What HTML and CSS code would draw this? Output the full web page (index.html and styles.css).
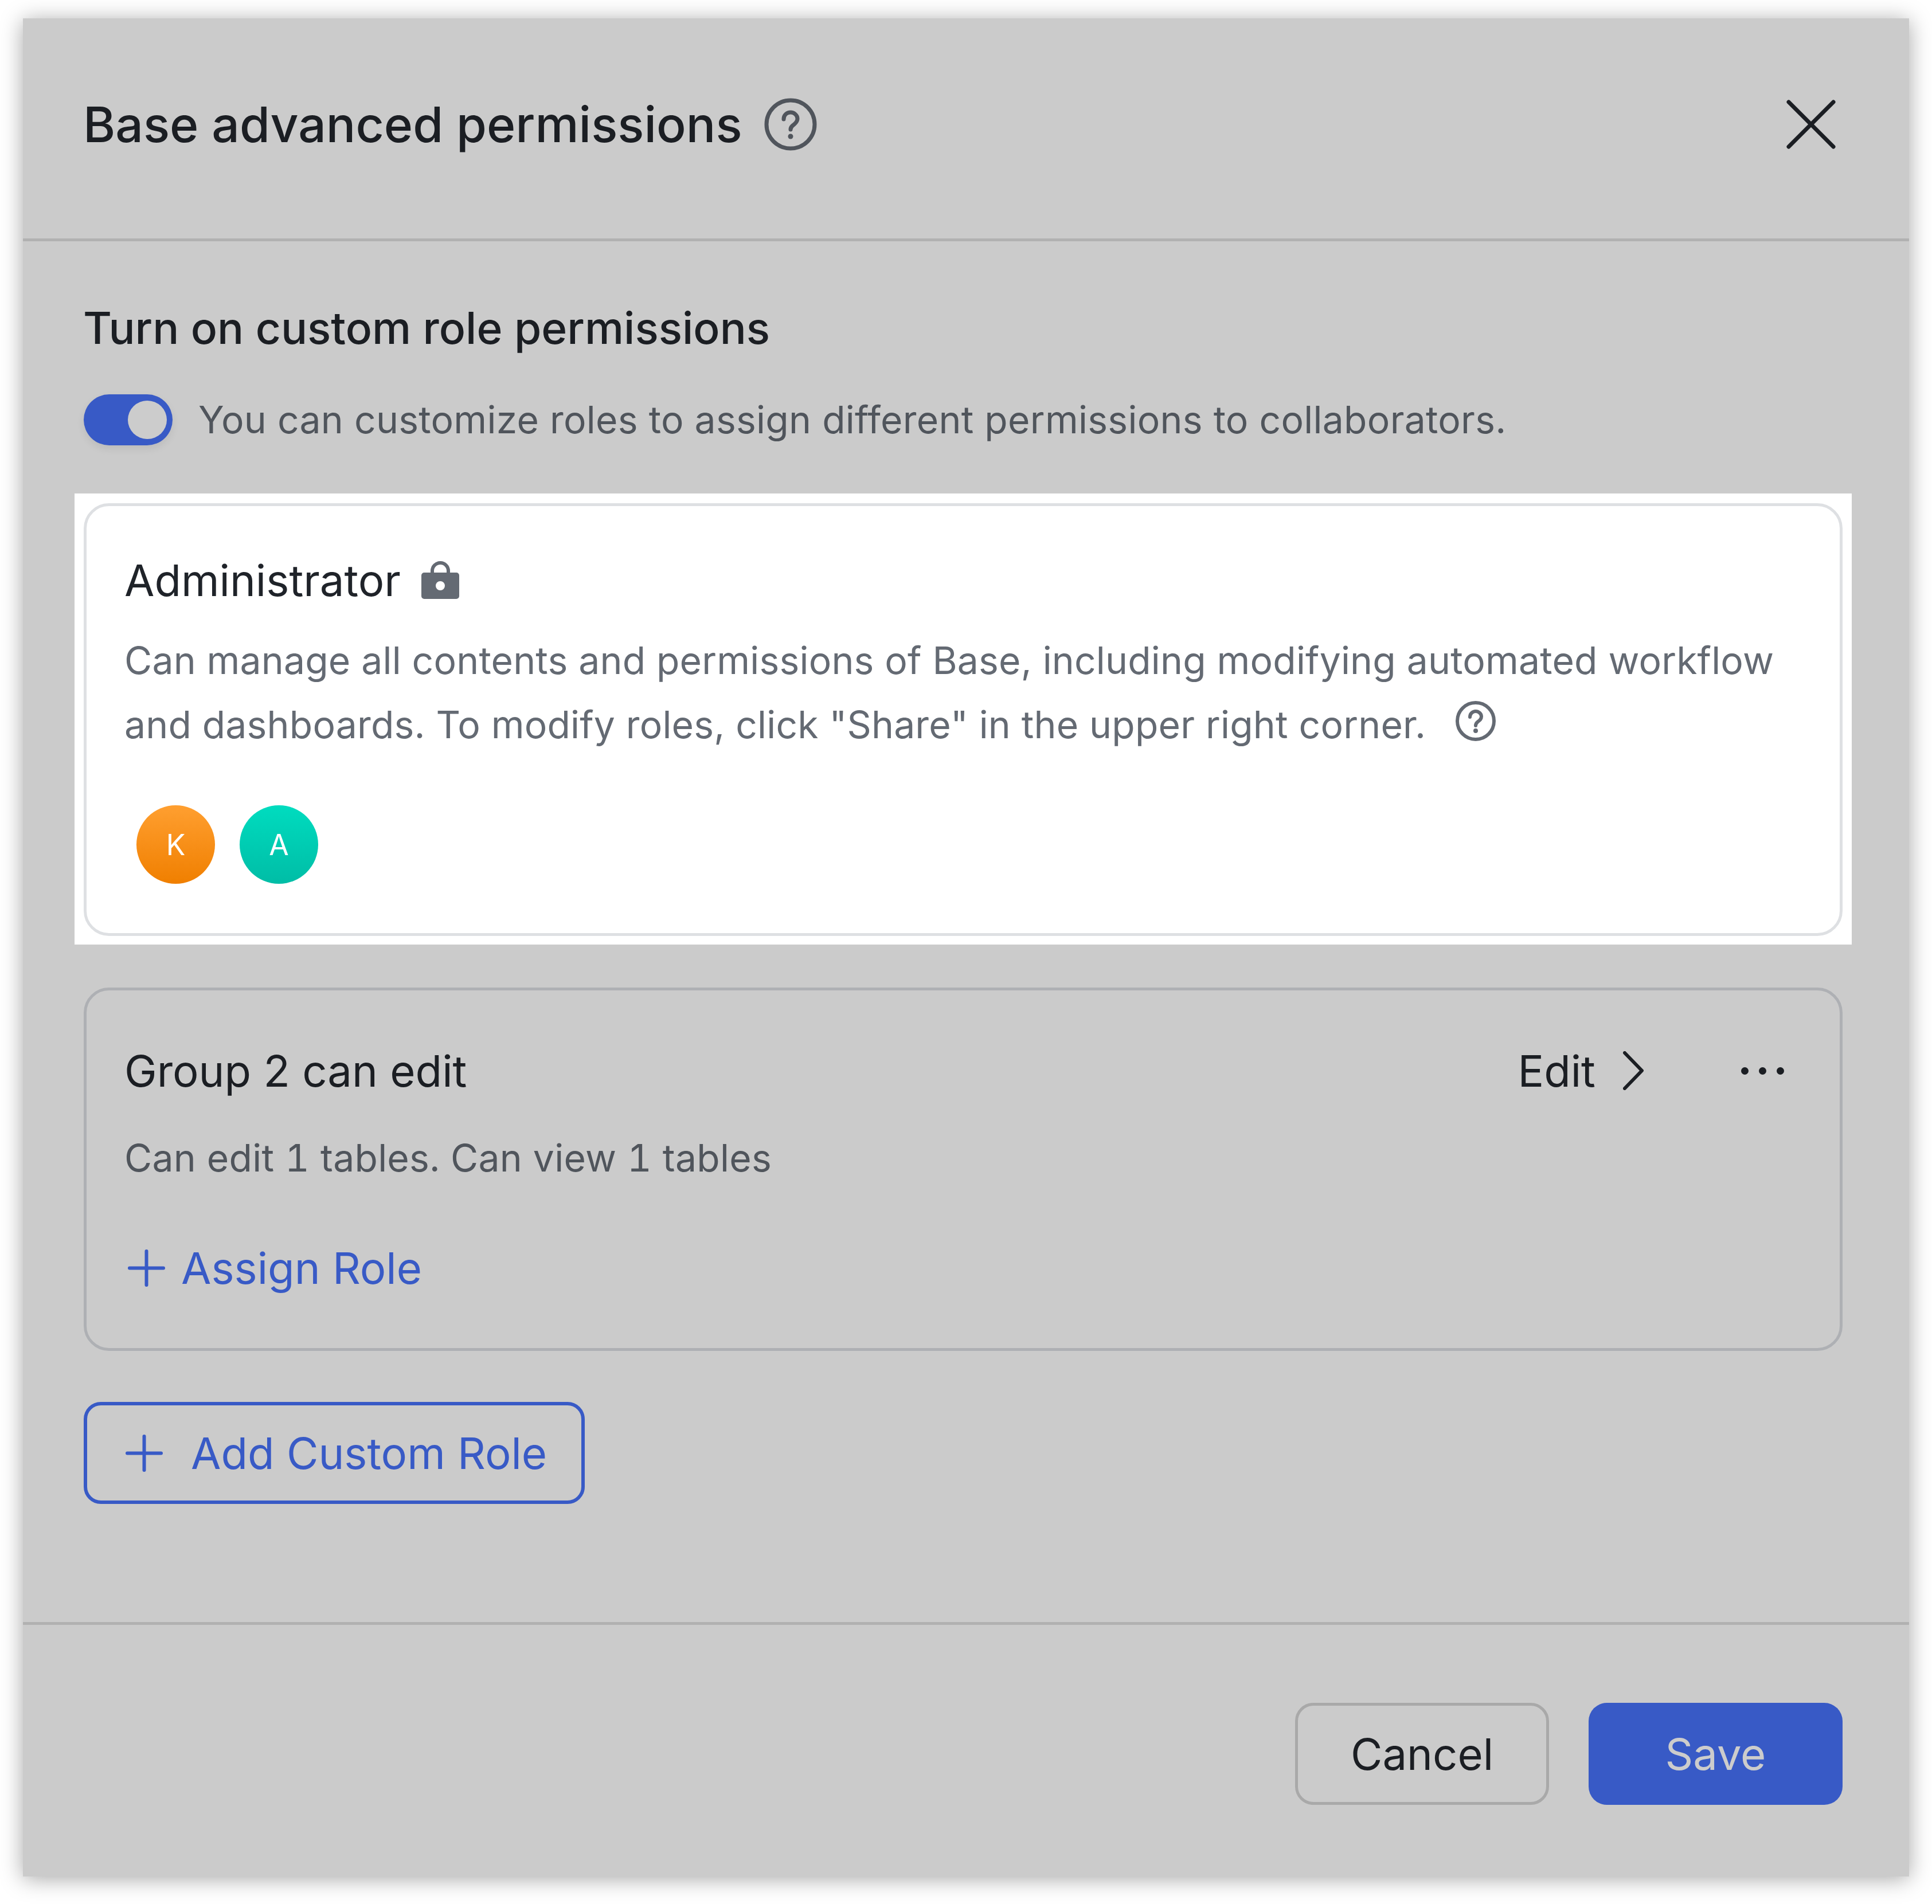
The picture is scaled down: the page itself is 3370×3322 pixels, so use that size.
FILE: index.html
```html
<!DOCTYPE html>
<html lang="en">
<head>
    <meta charset="UTF-8">
    <title>Base advanced permissions</title>
    <link rel="stylesheet" href="styles.css">
</head>
<body>
    <div class="dialog">
        <div class="dialog-header">
            <h1 class="dialog-title">Base advanced permissions</h1>
            <svg class="help-big" viewBox="0 0 92 92" fill="none" stroke="#50555c" stroke-width="7">
                <circle cx="46" cy="46" r="42"/>
                <path d="M34 37c0-8 6-12 12-12s12 5 12 11c0 6-4 8-7 11-3 2-5 4-5 8" stroke-linecap="round"/>
                <circle cx="46" cy="67" r="4.5" fill="#50555c" stroke="none"/>
            </svg>
            <svg class="close-icon" viewBox="0 0 86 86" fill="none" stroke="#1b1e23" stroke-width="7" stroke-linecap="round">
                <path d="M4 4L82 82M82 4L4 82"/>
            </svg>
        </div>

        <div class="dialog-body">
            <h2 class="section-title">Turn on custom role permissions</h2>
            <div class="toggle-row">
                <div class="toggle"><div class="knob"></div></div>
                <span class="hint">You can customize roles to assign different permissions to collaborators.</span>
            </div>

            <div class="highlight">
                <div class="role-card admin-card">
                    <div class="role-name">
                        Administrator
                        <svg class="lock-icon" viewBox="0 0 66 66">
                            <path d="M19 24V17a14 14 0 0 1 28 0v7" fill="none" stroke="#646a73" stroke-width="6"/>
                            <path fill-rule="evenodd" fill="#646a73" d="M5 20h56a5 5 0 0 1 5 5v36a5 5 0 0 1-5 5H5a5 5 0 0 1-5-5V25a5 5 0 0 1 5-5zM33 35a8 8 0 1 0 0 16a8 8 0 0 0 0-16z"/>
                        </svg>
                    </div>
                    <div class="role-desc admin-desc">
                        Can manage all contents and permissions of Base, including modifying automated workflow<br>
                        and dashboards. To modify roles, click "Share" in the upper right corner.
                        <svg class="help-small" viewBox="0 0 72 72" fill="none" stroke="#646a73" stroke-width="6">
                            <circle cx="36" cy="36" r="32"/>
                            <path d="M26 29c0-6 5-10 10-10s10 4 10 9c0 5-3 7-6 9-2 2-4 3-4 7" stroke-linecap="round"/>
                            <circle cx="36" cy="53" r="4" fill="#646a73" stroke="none"/>
                        </svg>
                    </div>
                    <div class="avatars">
                        <div class="avatar orange">K</div>
                        <div class="avatar teal">A</div>
                    </div>
                </div>
            </div>

            <div class="role-card group-card">
                <div class="group-top">
                    <div class="role-name">Group 2 can edit</div>
                    <div class="group-actions">
                        <span class="edit-link">Edit</span>
                        <svg class="chevron" viewBox="0 0 36 68" fill="none" stroke="#1b1e23" stroke-width="6" stroke-linecap="round" stroke-linejoin="round">
                            <path d="M3 3L33 34L3 65"/>
                        </svg>
                        <div class="dots"><i></i><i></i><i></i></div>
                    </div>
                </div>
                <div class="role-desc group-desc">Can edit 1 tables. Can view 1 tables</div>
                <div class="assign">
                    <svg class="plus" viewBox="0 0 65 65" fill="none" stroke="#385ac6" stroke-width="6" stroke-linecap="round">
                        <path d="M32.5 3V62M3 32.5H62"/>
                    </svg>
                    Assign Role
                </div>
            </div>

            <div class="add-role">
                <svg class="plus" viewBox="0 0 65 65" fill="none" stroke="#385ac6" stroke-width="6" stroke-linecap="round">
                    <path d="M32.5 3V62M3 32.5H62"/>
                </svg>
                Add Custom Role
            </div>
        </div>

        <div class="dialog-footer">
            <div class="btn btn-cancel">Cancel</div>
            <div class="btn btn-save">Save</div>
        </div>
    </div>
</body>
</html>
```

FILE: styles.css
```css
* {
    box-sizing: border-box;
}

html, body {
    margin: 0;
    height: 3322px;
    background-color: #fff;
    overflow: hidden;
}

body {
    padding: 32px 40px 0;
    font-family: Inter, "Liberation Sans", sans-serif;
    color: #1b1e23;
}

.dialog {
    width: 3290px;
    height: 3242px;
    display: flex;
    flex-direction: column;
    background-color: #cbcbcb;
    box-shadow: 0 4px 36px rgba(0, 0, 0, 0.35);
}

.dialog-header {
    height: 389px;
    flex-shrink: 0;
    display: flex;
    align-items: center;
    padding: 0 128px 15px 105px;
    border-bottom: 5px solid #b1b1b1;
}

.dialog-title {
    margin: 0;
    font-size: 85.7px;
    font-weight: 500;
    line-height: 100px;
}

.help-big {
    width: 92px;
    height: 92px;
    margin-left: 38px;
}

.close-icon {
    width: 86px;
    height: 86px;
    margin-left: auto;
}

.dialog-body {
    flex: 1;
    padding: 101px 116px 0 106px;
}

.section-title {
    margin: 0 0 0 -1px;
    font-size: 76.7px;
    font-weight: 500;
    line-height: 100px;
}

.toggle-row {
    display: flex;
    align-items: center;
    margin-top: 66px;
}

.toggle {
    width: 155px;
    height: 89px;
    padding: 11px 10px;
    border-radius: 45px;
    background-color: #385ac6;
    display: flex;
    justify-content: flex-end;
    box-shadow: 0 6px 14px rgba(0, 0, 0, 0.08);
}

.knob {
    width: 68px;
    height: 67px;
    border-radius: 50%;
    background-color: #ccc;
}

.hint {
    margin-left: 45px;
    font-size: 66px;
    line-height: 89px;
    letter-spacing: 0.26px;
    color: #50555c;
}

.highlight {
    margin: 84px -16px 0;
    padding: 17px 16px 15px;
    background-color: #fff;
}

.role-card {
    border: 5px solid #aeb0b4;
    border-radius: 44px;
    padding: 0 66px;
}

.admin-card {
    height: 755px;
    padding-top: 79px;
    border-color: #dee0e3;
    color: #1f2329;
}

.role-name {
    display: flex;
    align-items: center;
    font-size: 76px;
    line-height: 100px;
}

.lock-icon {
    width: 66px;
    height: 66px;
    margin-left: 36px;
}

.role-desc {
    font-size: 66px;
    line-height: 112px;
    letter-spacing: 0.26px;
    color: #50555c;
}

.admin-desc {
    margin-top: 34px;
    letter-spacing: 0.18px;
    color: #646a73;
}

.help-small {
    width: 72px;
    height: 72px;
    margin-left: 32px;
    vertical-align: -6px;
}

.avatars {
    display: flex;
    gap: 43px;
    margin: 85px 0 0 21px;
}

.avatar {
    width: 137px;
    height: 137px;
    border-radius: 50%;
    display: flex;
    align-items: center;
    justify-content: center;
    font-size: 50px;
    font-weight: 400;
    color: #fff;
}

.orange {
    background: linear-gradient(#ff9f30, #f07f00);
}

.teal {
    background: linear-gradient(#00dcbf, #00bda6);
}

.group-card {
    margin-top: 75px;
    height: 634px;
    padding-top: 90px;
}

.group-top {
    display: flex;
    justify-content: space-between;
}

.group-actions {
    display: flex;
    align-items: center;
}

.edit-link {
    font-size: 76px;
    line-height: 100px;
}

.chevron {
    width: 36px;
    height: 68px;
    margin-left: 48px;
}

.dots {
    display: flex;
    gap: 18px;
    margin: 0 31px 0 170px;
}

.dots i {
    width: 13px;
    height: 13px;
    border-radius: 50%;
    background-color: #1b1e23;
}

.group-desc {
    margin-top: 46px;
    font-feature-settings: "tnum";
    word-spacing: 0.8px;
}

.assign {
    display: flex;
    align-items: center;
    margin-top: 86px;
    font-size: 76px;
    line-height: 100px;
    color: #385ac6;
}

.assign .plus {
    width: 65px;
    height: 65px;
    margin: 0 28px 0 6px;
}

.add-role {
    width: 874px;
    height: 178px;
    margin-top: 89px;
    display: flex;
    align-items: center;
    padding-left: 67px;
    border: 6px solid #385ac6;
    border-radius: 30px;
    font-size: 76px;
    color: #385ac6;
}

.add-role .plus {
    width: 65px;
    height: 65px;
    margin-right: 49px;
}

.dialog-footer {
    height: 444px;
    flex-shrink: 0;
    display: flex;
    justify-content: flex-end;
    gap: 69px;
    padding: 136px 116px 0 0;
    border-top: 5px solid #b1b1b1;
}

.btn {
    width: 443px;
    height: 178px;
    display: flex;
    align-items: center;
    justify-content: center;
    border-radius: 32px;
    font-size: 76px;
}

.btn-cancel {
    border: 5px solid #a9a9a9;
}

.btn-save {
    background-color: #385ac6;
    color: #ccc;
}
```
